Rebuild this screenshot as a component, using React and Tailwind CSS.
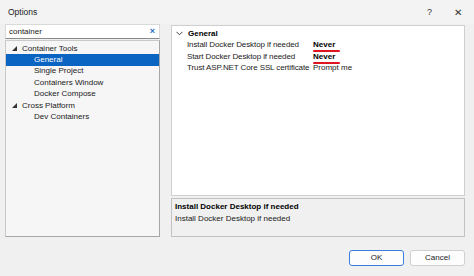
import React from "react";

const font = { fontFamily: '"Liberation Sans", Arial, sans-serif' };

function TreeRow({ label, depth, expander, selected }) {
  return (
    <div
      className={`h-[11.4px] flex items-center leading-none whitespace-nowrap ${
        selected ? "bg-[#0a64c2] text-white" : "text-[#1a1a1a]"
      }`}
    >
      <div className={depth === 0 ? "w-[16px] pl-[6px]" : "w-[28px]"}>
        {expander && (
          <svg width="5" height="5" viewBox="0 0 5 5">
            <polygon points="5,0 5,5 0,5" fill="#333" />
          </svg>
        )}
      </div>
      <span>{label}</span>
    </div>
  );
}

function PropRow({ name, value, bold }) {
  return (
    <div className="h-[11.5px] flex items-center leading-none whitespace-nowrap">
      <div className="w-[141px] shrink-0 pl-[15px] text-[#1a1a1a] tracking-[-0.1px]">{name}</div>
      <div className="relative">
        <span className={bold ? "font-bold text-black" : "text-[#1a1a1a]"}>{value}</span>
        {bold && (
          <div className="absolute left-0 top-[9px] w-[27px] h-[2px] rounded-full bg-[#e0141e]" />
        )}
      </div>
    </div>
  );
}

export default function App() {
  return (
    <div
      className="w-[474px] h-[276px] bg-[#f0f0f0] flex flex-col text-[8px] overflow-hidden"
      style={font}
    >
      {/* title bar */}
      <div className="h-[24px] flex items-start justify-between bg-[#f3f3f3]">
        <span className="pl-[8px] pt-[6px] text-[8.5px] text-[#1a1a1a]">Options</span>
        <div className="flex items-center gap-[22px] pr-[12px] pt-[5px] text-[9px] text-[#333]">
          <span>?</span>
          <span className="text-[10px]">✕</span>
        </div>
      </div>

      {/* body */}
      <div className="flex h-[213px] pl-[5px]">
        <div className="w-[155px] flex flex-col">
          <div className="h-[15px] bg-white border border-[#d9d9d9] border-b-[#8a8a8a] flex items-center justify-between pl-[3px] pr-[4px] whitespace-nowrap">
            <span className="text-[#1a1a1a]">container</span>
            <span className="text-[#1f6fc5] text-[9px] font-bold leading-none">×</span>
          </div>
          <div className="mt-[1px] h-[197px] bg-[#f6f6f6] border border-[#c9c9c9] border-r-[#a6a6a6] border-b-[#a6a6a6] pt-[2px]">
            <TreeRow label="Container Tools" depth={0} expander />
            <TreeRow label="General" depth={1} selected />
            <TreeRow label="Single Project" depth={1} />
            <TreeRow label="Containers Window" depth={1} />
            <TreeRow label="Docker Compose" depth={1} />
            <TreeRow label="Cross Platform" depth={0} expander />
            <TreeRow label="Dev Containers" depth={1} />
          </div>
        </div>

        <div className="ml-[11px] mt-[1px] w-[294px] flex flex-col">
          <div className="h-[172px] bg-white border border-[#cfcfcf] pt-[2px]">
            <div className="h-[11.5px] flex items-center leading-none">
              <div className="w-[16px] pl-[4px]">
                <svg width="7" height="5" viewBox="0 0 7 5">
                  <polyline points="0.5,0.8 3.5,3.8 6.5,0.8" fill="none" stroke="#444" strokeWidth="1" />
                </svg>
              </div>
              <span className="font-bold text-black">General</span>
            </div>
            <PropRow name="Install Docker Desktop if needed" value="Never" bold />
            <PropRow name="Start Docker Desktop if needed" value="Never" bold />
            <PropRow name="Trust ASP.NET Core SSL certificate" value="Prompt me" />
          </div>
          <div className="mt-[2px] h-[39px] bg-[#f0f0f0] border border-[#c2c2c2] pl-[3px] pt-[2px] leading-[12px] whitespace-nowrap">
            <div className="font-bold text-black">Install Docker Desktop if needed</div>
            <div className="text-[#1a1a1a]">Install Docker Desktop if needed</div>
          </div>
        </div>
      </div>

      {/* footer */}
      <div className="flex justify-end gap-[6px] pr-[9px] mt-[13px]">
        <button className="w-[55px] h-[16px] bg-[#fdfdfd] border border-[#3b7ddd] rounded-[3px] text-[8px] text-[#1a1a1a] leading-none">
          OK
        </button>
        <button className="w-[55px] h-[16px] bg-[#fdfdfd] border border-[#d0d0d0] rounded-[3px] text-[8px] text-[#1a1a1a] leading-none">
          Cancel
        </button>
      </div>
    </div>
  );
}
